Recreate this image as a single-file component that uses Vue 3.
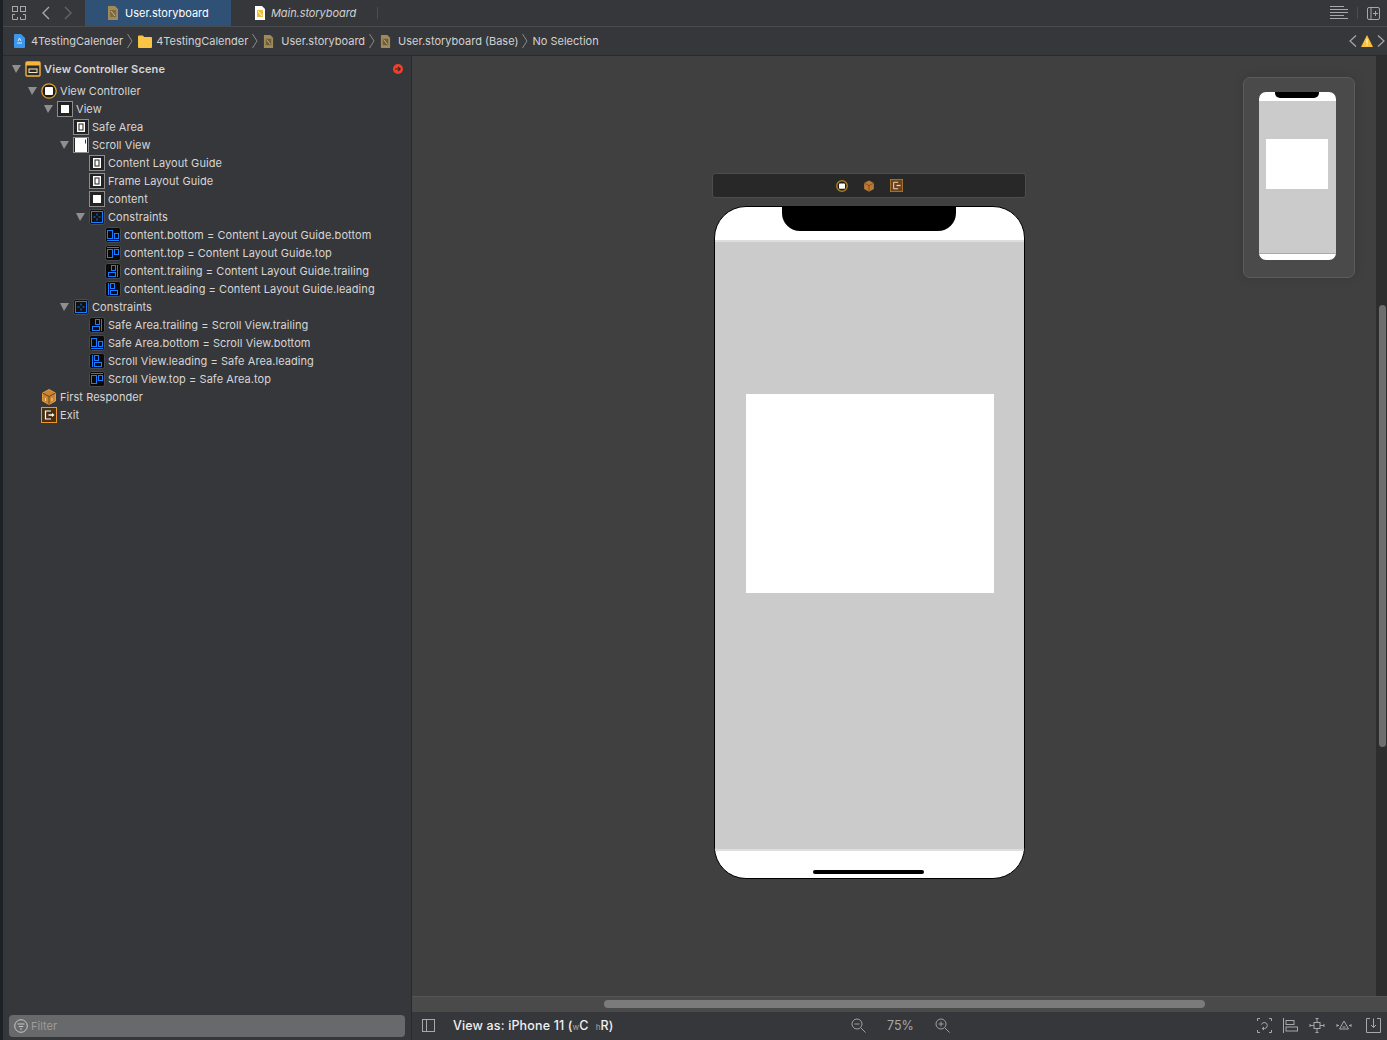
<template>
  <div class="app">
    <!-- Tab bar -->
    <div class="tabbar">
      <svg class="ic grid" width="14" height="14" viewBox="0 0 14 14" fill="none" stroke="#a8a8a8">
        <rect x="0.5" y="0.5" width="5" height="5" />
        <rect x="8.5" y="0.5" width="5" height="5" />
        <path d="M5.500 11v2.500h-5v-5H3M8.500 11v2.500h5v-5H11" />
      </svg>
      <svg class="ic back" width="9" height="14" viewBox="0 0 9 14" fill="none" stroke="#a8a8a8" stroke-width="1.4">
        <path d="M8 1 2 7l6 6" />
      </svg>
      <svg class="ic forward" width="9" height="14" viewBox="0 0 9 14" fill="none" stroke="#636466" stroke-width="1.4">
        <path d="M1 1l6 6-6 6" />
      </svg>
      <div class="tab active">
        <svg width="12" height="14" viewBox="0 0 12 14"><path d="M1 0h7l3 3v11H1z" fill="#a08a58" /><path d="M3 4h6v7H3z" fill="#7c6a42" /><path d="M4 5l4 5" stroke="#c9b680" /></svg>
        <span>User.storyboard</span>
      </div>
      <div class="tab italic">
        <svg width="12" height="14" viewBox="0 0 12 14"><path d="M1 0h7l3 3v11H1z" fill="#fff" /><path d="M3 4h6v7H3z" fill="#f1bd3c" /><path d="M4 5l4 5" stroke="#fff" /></svg>
        <span>Main.storyboard</span>
      </div>
      <div class="tab-sep"></div>
      <div class="tabbar-right">
        <svg width="18" height="14" viewBox="0 0 18 14" stroke="#a8a8a8">
          <path d="M0 .5h14M0 3.500h18M0 6.500h18M0 9.500h14M0 12.500h18" />
        </svg>
        <div class="tab-sep small"></div>
        <svg width="13" height="13" viewBox="0 0 13 13" fill="none" stroke="#a8a8a8">
          <rect x="0.5" y="0.5" width="12" height="12" rx="1.5" />
          <path d="M4 .5v12M6 6.500h5M8.500 4v5" />
        </svg>
      </div>
    </div>

    <!-- Jump bar -->
    <div class="jumpbar">
      <svg width="11" height="14" viewBox="0 0 11 14"><path d="M0 1a1 1 0 0 1 1-1h6l4 4v9a1 1 0 0 1-1 1H1a1 1 0 0 1-1-1z" fill="#3b96ec" /><path d="M3 9h5M4 7l1.500-3L7 7" stroke="#dcecfb" fill="none" /></svg>
      <span class="crumb first">4TestingCalender</span>
      <svg class="chev" width="6" height="14" viewBox="0 0 6 14" fill="none" stroke="#8a8a8a"><path d="M.5 0 5 7 .5 14" /></svg>
      <svg class="folder" width="14" height="13" viewBox="0 0 14 13"><path d="M0 1.500A1 1 0 0 1 1 .5h4l1 1.500h7a1 1 0 0 1 1 1V12a1 1 0 0 1-1 1H1a1 1 0 0 1-1-1z" fill="#f8c544" /></svg>
      <span class="crumb">4TestingCalender</span>
      <svg class="chev" width="6" height="14" viewBox="0 0 6 14" fill="none" stroke="#8a8a8a"><path d="M.5 0 5 7 .5 14" /></svg>
      <svg class="doc" width="11" height="13" viewBox="0 0 12 14"><path d="M1 0h7l3 3v11H1z" fill="#a08a58" /><path d="M3 4h6v7H3z" fill="#6d5d3c" /><path d="M4 5l4 5" stroke="#c9b680" /></svg>
      <span class="crumb">User.storyboard</span>
      <svg class="chev" width="6" height="14" viewBox="0 0 6 14" fill="none" stroke="#8a8a8a"><path d="M.5 0 5 7 .5 14" /></svg>
      <svg class="doc" width="11" height="13" viewBox="0 0 12 14"><path d="M1 0h7l3 3v11H1z" fill="#a08a58" /><path d="M3 4h6v7H3z" fill="#6d5d3c" /><path d="M4 5l4 5" stroke="#c9b680" /></svg>
      <span class="crumb">User.storyboard (Base)</span>
      <svg class="chev" width="6" height="14" viewBox="0 0 6 14" fill="none" stroke="#8a8a8a"><path d="M.5 0 5 7 .5 14" /></svg>
      <span class="crumb">No Selection</span>
      <div class="jump-right">
        <svg width="8" height="12" viewBox="0 0 8 12" fill="none" stroke="#a8a8a8" stroke-width="1.2"><path d="M7 .5 1 6l6 5.500" /></svg>
        <svg width="12" height="12" viewBox="0 0 12 12"><path d="M6 0l6 12H0z" fill="#f8c03c" /><path d="M6 4v4.500M6 9.500v1.200" stroke="#fff" /></svg>
        <svg width="8" height="12" viewBox="0 0 8 12" fill="none" stroke="#a8a8a8" stroke-width="1.2"><path d="M1 .5 7 6l-6 5.500" /></svg>
      </div>
    </div>

    <div class="main">
      <!-- Document outline -->
      <aside class="outline">
        <div class="tree">
          <div v-for="row in rows" :key="row.id" class="row" :class="{ scene: row.icon === 'scene' }"
            :style="{ paddingLeft: 9 + row.level * 16 + 'px' }">
            <span class="toggle" :class="{ none: !row.open }"></span>

            <svg class="row-icon" width="16" height="16" viewBox="0 0 16 16" fill="none">
              <template v-if="row.icon === 'scene'">
                <rect x="1" y="1" width="14" height="14" rx="1" fill="#2b2b2b" stroke="#f5b53a" stroke-width="1.4" />
                <rect x="1" y="1" width="14" height="3.500" fill="#f5b53a" />
                <rect x="4" y="8" width="8" height="3.500" stroke="#f5e9c8" />
              </template>
              <template v-else-if="row.icon === 'vc'">
                <circle cx="8" cy="8" r="7.200" fill="#1d1d1d" stroke="#e6a02c" stroke-width="1.300" />
                <rect x="4" y="4" width="8" height="8" rx="1" fill="#fff" />
              </template>
              <template v-else-if="row.icon === 'view'">
                <rect x="0.5" y="0.5" width="15" height="15" fill="#232323" stroke="#8e8e8e" />
                <rect x="4" y="4" width="8" height="8" fill="#fff" />
              </template>
              <template v-else-if="row.icon === 'guide'">
                <rect x="0.5" y="0.5" width="15" height="15" fill="#232323" stroke="#8e8e8e" />
                <rect x="4" y="3" width="8" height="10" fill="#fff" />
                <rect x="6" y="5" width="4" height="6" fill="#fff" stroke="#222" />
              </template>
              <template v-else-if="row.icon === 'scroll'">
                <rect x="0.5" y="0.5" width="15" height="15" fill="#232323" stroke="#8e8e8e" />
                <rect x="2" y="1" width="12" height="14" fill="#fff" />
                <path d="M12.500 2.500v4" stroke="#333" />
              </template>
              <template v-else-if="row.icon === 'cons'">
                <rect x="0.5" y="0.5" width="15" height="15" rx="2" fill="#111" stroke="#4b4b4b" />
                <rect x="2.500" y="2.500" width="11" height="11" stroke="#1a7dff" />
                <path d="M8 4.500v2M8 9.500v2M4.500 8h2M9.500 8h2" stroke="#1a7dff" />
              </template>
              <template v-else-if="row.icon === 'bottom'">
                <rect x="0.5" y="0.5" width="15" height="15" rx="2" fill="#0a0a0a" stroke="#4b4b4b" />
                <path d="M2 13.500h12" stroke="#1a7dff" />
                <rect x="2.500" y="3.500" width="5" height="8" stroke="#1a7dff" />
                <rect x="9.500" y="6.500" width="4" height="5" stroke="#1a7dff" />
              </template>
              <template v-else-if="row.icon === 'top'">
                <rect x="0.5" y="0.5" width="15" height="15" rx="2" fill="#0a0a0a" stroke="#4b4b4b" />
                <path d="M2 2.500h12" stroke="#1a7dff" />
                <rect x="2.500" y="4.500" width="5" height="8" stroke="#1a7dff" />
                <rect x="9.500" y="4.500" width="4" height="5" stroke="#1a7dff" />
              </template>
              <template v-else-if="row.icon === 'trailing'">
                <rect x="0.5" y="0.5" width="15" height="15" rx="2" fill="#0a0a0a" stroke="#4b4b4b" />
                <path d="M12.500 2v12" stroke="#1a7dff" />
                <rect x="6.500" y="2.500" width="4" height="5" stroke="#1a7dff" />
                <rect x="3.500" y="9.500" width="7" height="4" stroke="#1a7dff" />
              </template>
              <template v-else-if="row.icon === 'leading'">
                <rect x="0.5" y="0.5" width="15" height="15" rx="2" fill="#0a0a0a" stroke="#4b4b4b" />
                <path d="M3.500 2v12" stroke="#1a7dff" />
                <rect x="5.500" y="2.500" width="4" height="5" stroke="#1a7dff" />
                <rect x="5.500" y="9.500" width="7" height="4" stroke="#1a7dff" />
              </template>
              <template v-else-if="row.icon === 'responder'">
                <path d="M8 .5 14.500 4v8L8 15.500 1.500 12V4z" fill="#c98434" stroke="#e59a3a" />
                <path d="M1.500 4 8 7.500 14.500 4M8 7.500v8" stroke="#6e4415" />
                <path d="M4.500 9v3M11 9v3" stroke="#f2d3a3" />
              </template>
              <template v-else-if="row.icon === 'exit'">
                <rect x="0.5" y="0.5" width="15" height="15" fill="#4a2f12" stroke="#ef972f" />
                <path d="M10 4H4.500v8H10" stroke="#fff" stroke-width="1.200" />
                <path d="M7.500 8h4.500" stroke="#fff" stroke-width="1.500" />
                <path d="M11 6l2.500 2-2.500 2z" fill="#fff" />
              </template>
            </svg>
            <span class="label">{{ row.label }}</span>
            <svg v-if="row.icon === 'scene'" class="error" width="10" height="10" viewBox="0 0 10 10">
              <circle cx="5" cy="5" r="5" fill="#f0402c" />
              <path d="M2 5h5M5 3l2.200 2L5 7" stroke="#36282a" stroke-width="1.200" fill="none" />
            </svg>
          </div>
        </div>
        <div class="filter">
          <svg width="14" height="14" viewBox="0 0 14 14" fill="none" stroke="#c8c8c8">
            <circle cx="7" cy="7" r="6.300" />
            <path d="M3.500 5h7M4.800 7.500h4.400M6 10h2" />
          </svg>
          <span>Filter</span>
        </div>
      </aside>

      <!-- Canvas -->
      <section class="editor">
        <div class="stage-wrap">
          <div class="stage">
            <div class="scene-bar">
              <svg width="12" height="12" viewBox="0 0 16 16" fill="none">
                <circle cx="8" cy="8" r="7" fill="#1d1d1d" stroke="#a87c22" stroke-width="2" />
                <rect x="4" y="4.500" width="8" height="7" rx="1" fill="#fff" />
              </svg>
              <svg width="12" height="12" viewBox="0 0 16 16">
                <path d="M8 .5 14.500 4v8L8 15.500 1.500 12V4z" fill="#b87a34" />
                <path d="M1.500 4 8 7.500 14.500 4M8 7.500v8" stroke="#6e4415" fill="none" />
              </svg>
              <svg width="13" height="13" viewBox="0 0 16 16" fill="none">
                <rect x="0.5" y="0.5" width="15" height="15" fill="#6b431b" stroke="#b87a34" />
                <path d="M10 4H4.500v8H10" stroke="#e8d8c0" stroke-width="1.200" />
                <path d="M8 8h5" stroke="#e8d8c0" stroke-width="1.500" />
              </svg>
            </div>

            <div class="phone">
              <div class="notch"></div>
              <div class="phone-body">
                <div class="content-box"></div>
              </div>
              <div class="home-indicator"></div>
            </div>

            <div class="minimap">
              <div class="mini-phone">
                <div class="mini-notch"></div>
                <div class="mini-body">
                  <div class="mini-box"></div>
                </div>
              </div>
            </div>
          </div>
          <div class="vscroll"><div class="vthumb"></div></div>
        </div>
        <div class="hscroll"><div class="hthumb"></div></div>

        <!-- Device bar -->
        <div class="devicebar">
          <svg class="panel-ic" width="13" height="13" viewBox="0 0 13 13" fill="none" stroke="#a8a8a8">
            <rect x="0.5" y="0.5" width="12" height="12" />
            <path d="M4.500 .5v12" />
          </svg>
          <div class="view-as">View as: iPhone 11 (<small>w</small>C &nbsp;<small>h</small>R)</div>
          <svg width="15" height="15" viewBox="0 0 15 15" fill="none" stroke="#a0a0a0">
            <circle cx="6" cy="6" r="5" />
            <path d="M3.500 6h5M10 10l4.500 4.500" />
          </svg>
          <span class="zoom">75%</span>
          <svg width="15" height="15" viewBox="0 0 15 15" fill="none" stroke="#a0a0a0">
            <circle cx="6" cy="6" r="5" />
            <path d="M3.500 6h5M6 3.500v5M10 10l4.500 4.500" />
          </svg>
          <div class="device-tools">
            <svg width="15" height="15" viewBox="0 0 15 15" fill="none" stroke="#a8a8a8">
              <path d="M.5 3V.5H3M12 .5h2.500V3M14.500 12v2.500H12M3 14.500H.5V12" />
              <path d="M4.500 6.500a3 3 0 1 1 3 4H5.500M7 9l-1.800 1.500L7 12" />
            </svg>
            <svg width="15" height="15" viewBox="0 0 15 15" fill="none" stroke="#a8a8a8">
              <path d="M.5 0v15" />
              <rect x="3" y="2.500" width="8" height="4" />
              <rect x="3" y="9" width="11.500" height="4" />
            </svg>
            <svg width="16" height="15" viewBox="0 0 16 15" fill="none" stroke="#a8a8a8">
              <rect x="5" y="4.500" width="6" height="6" />
              <path d="M8 .5v4M6.500.5h3M8 10.500v4M6.500 14.500h3M1 7.500h4M1 6v3M11 7.500h4M15 6v3" />
            </svg>
            <svg width="16" height="15" viewBox="0 0 16 15" fill="none" stroke="#a8a8a8">
              <path d="M8 3l4.500 8h-9zM1 7.500h2M1 6v3M13 7.500h2M15 6v3M6.500 9h3" />
            </svg>
            <svg class="embed" width="15" height="15" viewBox="0 0 15 15" fill="none" stroke="#a8a8a8">
              <path d="M4 .5H.5v14h14V.5H11M7.500 .5v9M5 7l2.500 2.500L10 7" />
            </svg>
          </div>
        </div>
      </section>
    </div>
  </div>
</template>

<script setup>
const rows = [
  { id: 1, level: 0, open: true, icon: 'scene', label: 'View Controller Scene' },
  { id: 2, level: 1, open: true, icon: 'vc', label: 'View Controller' },
  { id: 3, level: 2, open: true, icon: 'view', label: 'View' },
  { id: 4, level: 3, icon: 'guide', label: 'Safe Area' },
  { id: 5, level: 3, open: true, icon: 'scroll', label: 'Scroll View' },
  { id: 6, level: 4, icon: 'guide', label: 'Content Layout Guide' },
  { id: 7, level: 4, icon: 'guide', label: 'Frame Layout Guide' },
  { id: 8, level: 4, icon: 'view', label: 'content' },
  { id: 9, level: 4, open: true, icon: 'cons', label: 'Constraints' },
  { id: 10, level: 5, icon: 'bottom', label: 'content.bottom = Content Layout Guide.bottom' },
  { id: 11, level: 5, icon: 'top', label: 'content.top = Content Layout Guide.top' },
  { id: 12, level: 5, icon: 'trailing', label: 'content.trailing = Content Layout Guide.trailing' },
  { id: 13, level: 5, icon: 'leading', label: 'content.leading = Content Layout Guide.leading' },
  { id: 14, level: 3, open: true, icon: 'cons', label: 'Constraints' },
  { id: 15, level: 4, icon: 'trailing', label: 'Safe Area.trailing = Scroll View.trailing' },
  { id: 16, level: 4, icon: 'bottom', label: 'Safe Area.bottom = Scroll View.bottom' },
  { id: 17, level: 4, icon: 'leading', label: 'Scroll View.leading = Safe Area.leading' },
  { id: 18, level: 4, icon: 'top', label: 'Scroll View.top = Safe Area.top' },
  { id: 19, level: 1, icon: 'responder', label: 'First Responder' },
  { id: 20, level: 1, icon: 'exit', label: 'Exit' }
]
</script>

<style>
html,
body {
  margin: 0;
  background: #36373a;
}
</style>

<style scoped>
.app {
  width: 1387px;
  height: 1040px;
  display: flex;
  flex-direction: column;
  overflow: hidden;
  background: #36373a;
  color: #d6d6d6;
  font-family: Inter, "Liberation Sans", sans-serif;
  font-size: 11px;
  border-left: 3px solid #1c2027;
  box-sizing: border-box;
}

/* Tab bar */
.tabbar {
  height: 27px;
  flex: none;
  display: flex;
  align-items: center;
  box-sizing: border-box;
  border-bottom: 1px solid #4a4b4d;
  padding-left: 9px;
}

.back {
  margin-left: 15px;
}

.forward {
  margin-left: 14px;
}

.tab {
  height: 26px;
  display: flex;
  align-items: center;
  font-size: 11px;
  box-sizing: border-box;
}

.tab svg {
  margin-right: 6px;
}

.tab.active {
  width: 146px;
  margin-left: 12px;
  padding-left: 22px;
  background: #2f5176;
  color: #fff;
}

.tab.italic {
  font-style: italic;
  padding-left: 23px;
  width: 146px;
  color: #d0d0d0;
  letter-spacing: -0.07px;
}

.tab.italic svg {
  margin-right: 5px;
}

.tab-sep {
  width: 1px;
  height: 12px;
  background: #4c4d50;
}

.tabbar-right {
  margin-left: auto;
  display: flex;
  align-items: center;
  padding-right: 7px;
}

.tab-sep.small {
  margin: 0 9px;
}

/* Jump bar */
.jumpbar {
  height: 29px;
  flex: none;
  display: flex;
  align-items: center;
  box-sizing: border-box;
  border-bottom: 1px solid #2a2a2c;
  padding-left: 11px;
  background: #36373a;
}

.crumb {
  color: #d2d2d2;
  white-space: nowrap;
}

.crumb.first {
  margin-left: 6px;
}

.chev {
  margin: 0 4px 0 4px;
}

.folder {
  margin-left: 1px;
  margin-right: 4px;
}

.doc {
  margin-left: 1px;
  margin-right: 7px;
}

.jump-right {
  margin-left: auto;
  display: flex;
  align-items: center;
  gap: 4px;
  padding-right: 2px;
}

/* Outline */
.main {
  flex: 1;
  display: flex;
  min-height: 0;
}

.outline {
  width: 408px;
  flex: none;
  display: flex;
  flex-direction: column;
  background: #36373a;
  border-right: 1px solid #2a2a2c;
  box-sizing: content-box;
}

.tree {
  flex: 1;
  padding-top: 4px;
}

.row {
  height: 18px;
  display: flex;
  align-items: center;
  padding-right: 8px;
}

.row.scene {
  margin-bottom: 4px;
  font-weight: 600;
}

.row.scene .label {
  letter-spacing: 0.14px;
}

.toggle {
  width: 0;
  height: 0;
  margin-right: 4px;
  border-left: 4px solid transparent;
  border-right: 5px solid transparent;
  border-top: 8px solid #8f8f8f;
}

.toggle.none {
  visibility: hidden;
}

.row-icon {
  flex: none;
  margin-right: 3px;
}

.label {
  white-space: nowrap;
  color: #d6d6d6;
  letter-spacing: 0.06px;
}

.error {
  margin-left: auto;
}

.filter {
  height: 22px;
  margin: 0 6px 3px 6px;
  display: flex;
  align-items: center;
  gap: 3px;
  padding-left: 5px;
  background: #68696b;
  border-radius: 4px;
  color: #9c9c9c;
}

/* Editor */
.editor {
  flex: 1;
  min-width: 0;
  display: flex;
  flex-direction: column;
}

.stage-wrap {
  flex: 1;
  display: flex;
  min-height: 0;
}

.stage {
  position: relative;
  flex: 1;
  background: #404040;
}

.vscroll {
  width: 11px;
  flex: none;
  background: #2d2d2d;
  position: relative;
}

.vthumb {
  position: absolute;
  top: 249px;
  left: 3px;
  width: 7px;
  height: 442px;
  background: #6e6e6e;
  border-radius: 4px;
}

.hscroll {
  height: 16px;
  flex: none;
  position: relative;
  background: #4a4a4a;
  border-top: 1px solid #555;
  box-sizing: border-box;
}

.hthumb {
  position: absolute;
  top: 3px;
  left: 192px;
  width: 601px;
  height: 8px;
  background: #7b7b7b;
  border-radius: 4px;
}

.scene-bar {
  position: absolute;
  left: 300px;
  top: 117px;
  width: 314px;
  height: 25px;
  box-sizing: border-box;
  display: flex;
  align-items: center;
  justify-content: center;
  gap: 15px;
  background: #282828;
  border: 1px solid #4d4d4d;
  border-radius: 3px;
}

.phone {
  position: absolute;
  left: 302px;
  top: 150px;
  width: 311px;
  height: 673px;
  box-sizing: border-box;
  display: flex;
  flex-direction: column;
  background: #fff;
  border: 1px solid #000;
  border-radius: 32px;
  overflow: hidden;
}

.notch {
  position: absolute;
  top: 0;
  left: 67px;
  width: 174px;
  height: 24px;
  background: #000;
  border-radius: 0 0 18px 18px;
}

.phone-body {
  margin-top: 33px;
  height: 611px;
  flex: none;
  box-sizing: border-box;
  background: #cbcbcb;
  border-top: 2px solid #dedede;
  border-bottom: 2px solid #dedede;
  position: relative;
}

.content-box {
  position: absolute;
  left: 31px;
  top: 152px;
  width: 248px;
  height: 199px;
  background: #fff;
}

.home-indicator {
  position: absolute;
  left: 98px;
  bottom: 4px;
  width: 111px;
  height: 4px;
  border-radius: 2px;
  background: #000;
}

.minimap {
  position: absolute;
  left: 831px;
  top: 21px;
  width: 112px;
  height: 201px;
  box-sizing: border-box;
  padding: 14px 0 0 15px;
  background: #4a4a4a;
  border: 1px solid #5c5c5c;
  border-radius: 7px;
  box-shadow: 0 0 12px rgba(0, 0, 0, 0.12);
}

.mini-phone {
  position: relative;
  width: 77px;
  height: 168px;
  background: #fff;
  border-radius: 7px;
  overflow: hidden;
}

.mini-notch {
  position: absolute;
  left: 16px;
  top: 0;
  width: 44px;
  height: 6px;
  background: #000;
  border-radius: 0 0 5px 5px;
}

.mini-body {
  position: relative;
  margin-top: 9px;
  height: 153px;
  box-sizing: border-box;
  background: #cbcbcb;
  border-bottom: 1px solid #aaa;
}

.mini-box {
  position: absolute;
  left: 7px;
  top: 38px;
  width: 62px;
  height: 50px;
  background: #fff;
}

/* Device bar */
.devicebar {
  height: 28px;
  flex: none;
  display: flex;
  align-items: center;
  box-sizing: border-box;
  padding: 0 0 2px 10px;
  background: #36373a;
}

.view-as {
  width: 398px;
  margin-left: 18px;
  font-size: 12.500px;
  font-weight: 500;
  letter-spacing: 0.15px;
  color: #f0f0f0;
}

.view-as small {
  font-size: 8px;
  color: #999;
}

.zoom {
  width: 26px;
  margin: 0 22px 0 21px;
  font-size: 12.500px;
  color: #a8a8a8;
}

.device-tools {
  margin-left: auto;
  display: flex;
  align-items: center;
  gap: 11px;
  padding-right: 6px;
}

.embed {
  margin-left: 3px;
}
</style>
